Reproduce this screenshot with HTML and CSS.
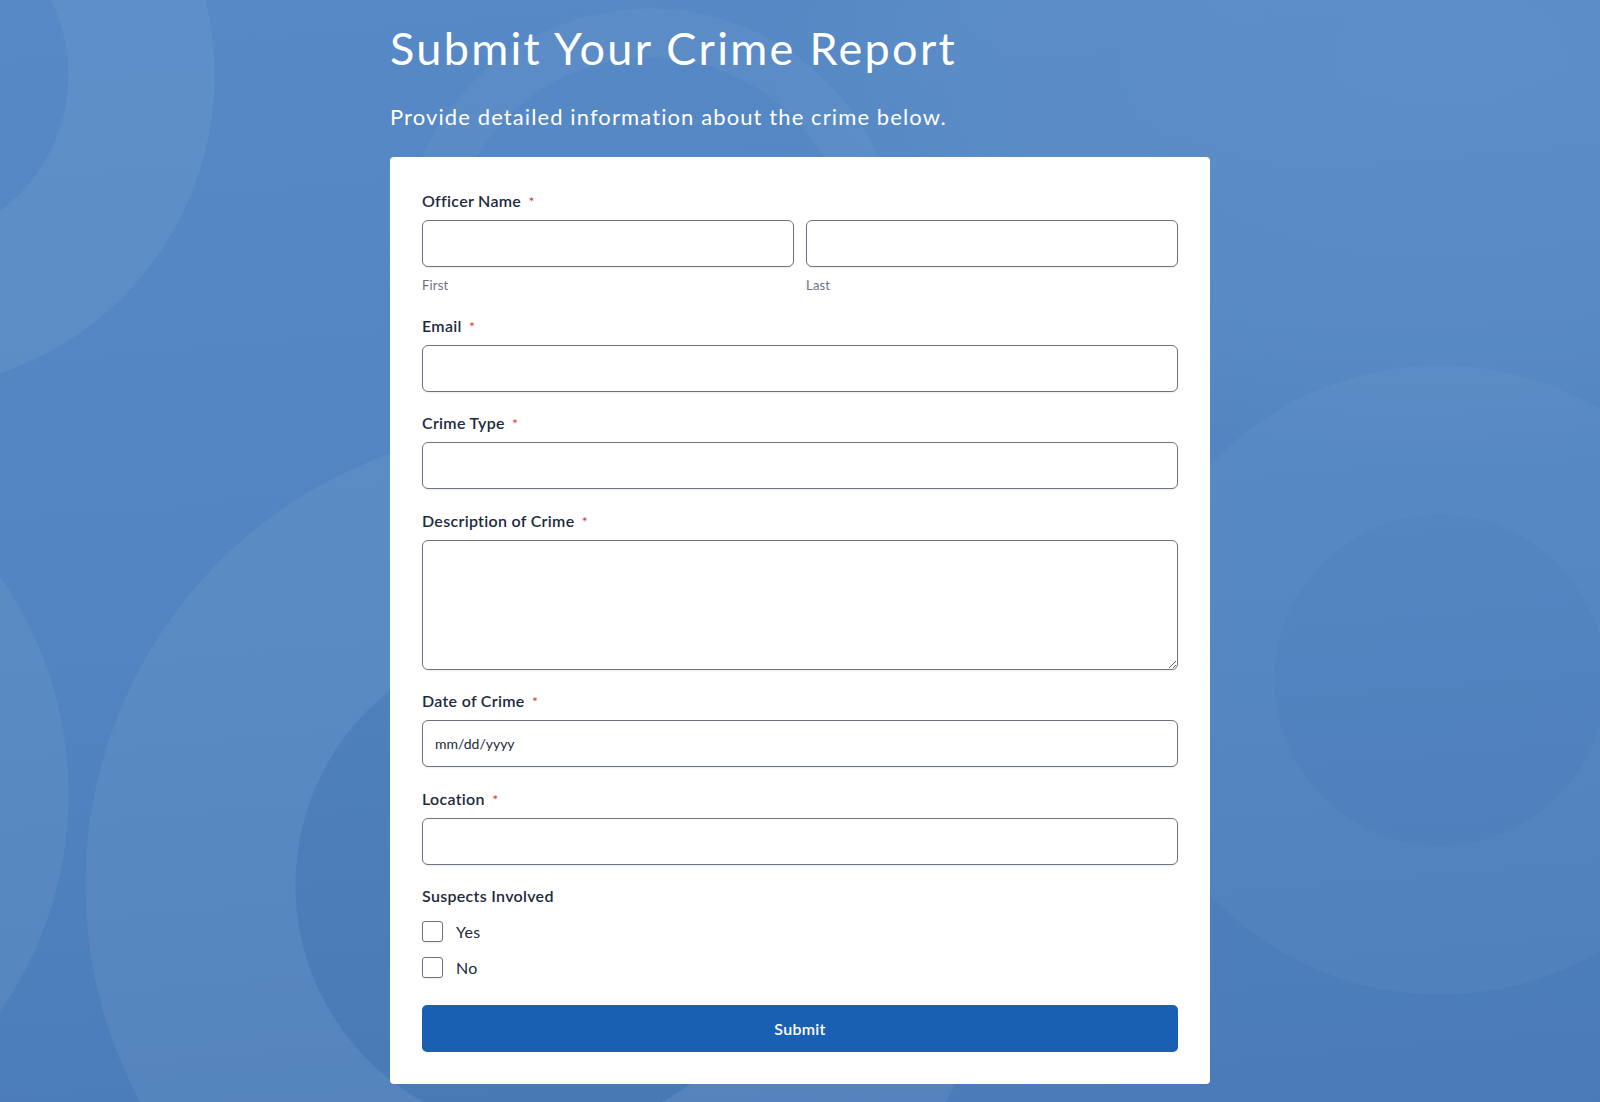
FILE: index.html
```html
<!DOCTYPE html>
<html lang="en">
<head>
<meta charset="utf-8">
<title>Submit Your Crime Report</title>
<link rel="stylesheet" href="styles.css">
</head>
<body>
<main class="page">
  <h1 class="title">Submit Your Crime Report</h1>
  <p class="subtitle">Provide detailed information about the crime below.</p>
  <form class="card">
    <div class="field">
      <div class="label">Officer Name <span class="req">*</span></div>
      <div class="name-row">
        <div class="name-col">
          <input class="input" type="text">
          <div class="sublabel">First</div>
        </div>
        <div class="name-col">
          <input class="input" type="text">
          <div class="sublabel">Last</div>
        </div>
      </div>
    </div>
    <div class="field">
      <div class="label">Email <span class="req">*</span></div>
      <input class="input" type="text">
    </div>
    <div class="field">
      <div class="label">Crime Type <span class="req">*</span></div>
      <input class="input" type="text">
    </div>
    <div class="field">
      <div class="label">Description of Crime <span class="req">*</span></div>
      <textarea class="input textarea"></textarea>
    </div>
    <div class="field">
      <div class="label">Date of Crime <span class="req">*</span></div>
      <input class="input date" type="text" placeholder="mm/dd/yyyy">
    </div>
    <div class="field">
      <div class="label">Location <span class="req">*</span></div>
      <input class="input" type="text">
    </div>
    <div class="field">
      <div class="label">Suspects Involved</div>
      <div class="options">
        <label class="option"><span class="check"></span><span>Yes</span></label>
        <label class="option"><span class="check"></span><span>No</span></label>
      </div>
    </div>
    <button class="submit" type="button">Submit</button>
  </form>
</main>
</body>
</html>
```
FILE: styles.css
```css
* { box-sizing: border-box; }
html, body { margin: 0; padding: 0; }
body {
  min-height: 1102px;
  font-family: Lato, "Open Sans", Arial, sans-serif;
  color: #1d2a3d;
  background-color: #5184c1;
  background-image:
    radial-gradient(circle 315px at -100px 75px, transparent 168px, rgba(255,255,255,0.055) 169px, rgba(255,255,255,0.055) 314px, transparent 315px),
    radial-gradient(circle 379px at -310px 794px, rgba(255,255,255,0.055) 378px, transparent 379px),
    radial-gradient(circle 458px at 543px 885px, rgba(0,0,0,0.025) 247px, rgba(255,255,255,0.055) 248px, rgba(255,255,255,0.055) 457px, transparent 458px),
    radial-gradient(circle 250px at 650px 258px, transparent 200px, rgba(255,255,255,0.035) 201px, rgba(255,255,255,0.035) 249px, transparent 250px),
    radial-gradient(circle 315px at 1440px 680px, rgba(255,255,255,0.012) 165px, rgba(255,255,255,0.03) 166px, rgba(255,255,255,0.03) 314px, transparent 315px),
    radial-gradient(ellipse 700px 420px at 1450px 60px, rgba(255,255,255,0.05) 0, rgba(255,255,255,0.03) 70%, transparent 100%),
    linear-gradient(175deg, #5689c5 0%, #5184c0 55%, #4a7bb8 100%);
  background-repeat: no-repeat;
}
.page {
  width: 820px;
  margin: 0 auto;
  padding-top: 21px;
  padding-bottom: 18px;
}
.title {
  margin: 0;
  font-size: 45px;
  line-height: 1.2;
  font-weight: 400;
  letter-spacing: 2.3px;
  color: #ffffff;
}
.subtitle {
  margin: 29px 0 27px;
  font-size: 22px;
  line-height: 1.2;
  letter-spacing: 1.1px;
  color: #ffffff;
}
.card {
  background: #ffffff;
  border-radius: 4px;
  padding: 32px;
  display: flex;
  flex-direction: column;
}
.field {
  display: flex;
  flex-direction: column;
  margin-bottom: 19.5px;
}
.label {
  height: 24px;
  font-size: 16px;
  line-height: 24px;
  font-weight: 600;
  letter-spacing: 0.3px;
  color: #1d2a3d;
  margin-bottom: 7px;
  white-space: nowrap;
}
.req {
  color: #d63a2f;
  font-size: 14px;
  line-height: 1;
  font-weight: 400;
  margin-left: 3px;
}
.name-row {
  display: grid;
  grid-template-columns: 1fr 1fr;
  column-gap: 12px;
}
.name-col {
  display: flex;
  flex-direction: column;
}
.sublabel {
  margin-top: 9px;
  height: 18px;
  font-size: 13px;
  line-height: 18px;
  letter-spacing: 0.2px;
  color: #6b7280;
}
.input {
  display: block;
  width: 100%;
  height: 47px;
  border: 1px solid #6c7282;
  border-radius: 6px;
  background: #ffffff;
  box-shadow: 0 1px 2px rgba(16, 24, 40, 0.08);
  font-family: Lato, "Open Sans", Arial, sans-serif;
  font-size: 14px;
  color: #1d2a3d;
  padding: 0 12px;
  outline: none;
}
.textarea {
  height: 130px;
  padding: 10px 12px;
  resize: vertical;
}
.date::placeholder {
  color: #1d2a3d;
  opacity: 1;
}
.options {
  display: flex;
  flex-direction: column;
  gap: 15px;
  margin-top: 6px;
}
.option {
  display: flex;
  align-items: center;
  gap: 13px;
  height: 21px;
  font-size: 16px;
  line-height: 20px;
  letter-spacing: 0.3px;
  color: #1d2a3d;
}
.check {
  width: 21px;
  height: 21px;
  border: 1px solid #6c7282;
  border-radius: 3px;
  background: #ffffff;
  box-shadow: 0 1px 2px rgba(16, 24, 40, 0.08);
}
.submit {
  margin-top: 7px;
  height: 47px;
  border: none;
  border-radius: 5px;
  background: #195fb2;
  color: #ffffff;
  font-family: Lato, "Open Sans", Arial, sans-serif;
  font-size: 16px;
  font-weight: 600;
  letter-spacing: 0.3px;
}
```
